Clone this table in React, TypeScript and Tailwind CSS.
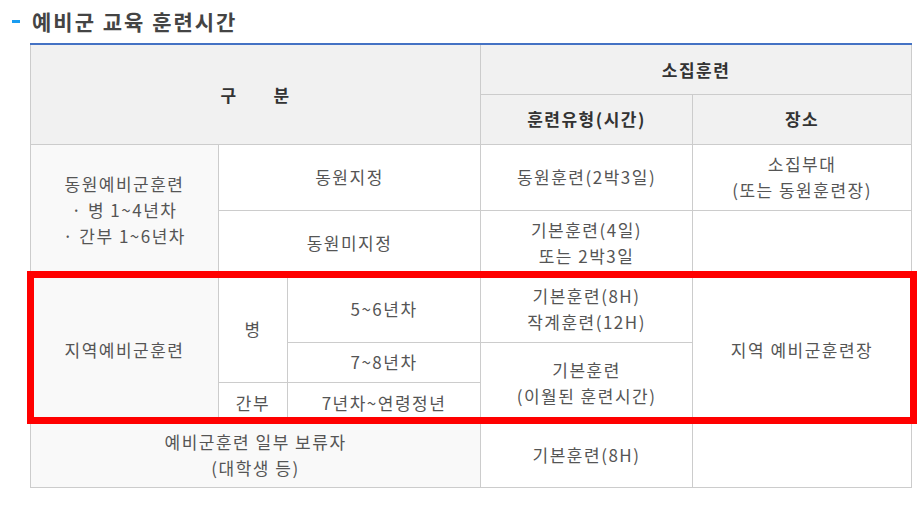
import React from "react";

const font = { fontFamily: '"Noto Sans CJK KR", "Noto Sans", sans-serif' };

export default function App() {
  const th = "border border-[#cccccc] bg-[#f1f1f1] text-[#333333] font-bold text-[17px] tracking-[1.5px] text-center align-middle p-0";
  const tdg = "border border-[#cccccc] bg-[#f9f9f9] text-[#555555] text-[17px] tracking-[1.5px] leading-[26px] text-center align-middle p-0";
  const td = "border border-[#cccccc] bg-white text-[#555555] text-[17px] tracking-[1.5px] leading-[26px] text-center align-middle p-0";
  return (
    <div className="relative w-[921px] h-[508px] bg-white" style={font}>
      <div className="flex items-center h-[30px] pt-[6px] box-content">
        <div className="ml-[12px] w-[8px] h-[3px] bg-[#1a9cf0]" />
        <h1 className="ml-[12px] text-[21px] font-bold tracking-[2px] text-[#444444] leading-[30px] -mt-[1px]">
          예비군 교육 훈련시간
        </h1>
      </div>
      <div className="ml-[30px] mt-[7px] w-[881px]">
        <table className="w-[881px] table-fixed border-collapse">
          <colgroup>
            <col className="w-[188px]" />
            <col className="w-[69px]" />
            <col className="w-[193px]" />
            <col className="w-[212px]" />
            <col className="w-[219px]" />
          </colgroup>
          <tbody>
            <tr className="h-[50px]">
              <th colSpan={3} rowSpan={2} className={th + " border-t-2 border-t-[#4472c4]"}>
                <span className="mr-[36px]">구</span>
                <span>분</span>
              </th>
              <th colSpan={2} className={th + " border-t-2 border-t-[#4472c4]"}>
                소집훈련
              </th>
            </tr>
            <tr className="h-[50px]">
              <th className={th}>훈련유형(시간)</th>
              <th className={th}>장소</th>
            </tr>
            <tr className="h-[66px]">
              <td rowSpan={2} className={tdg}>
                동원예비군훈련
                <br />· 병 1~4년차
                <br />· 간부 1~6년차
              </td>
              <td colSpan={2} className={td}>
                동원지정
              </td>
              <td className={td}>동원훈련(2박3일)</td>
              <td className={td}>
                소집부대
                <br />
                (또는 동원훈련장)
              </td>
            </tr>
            <tr className="h-[66px]">
              <td colSpan={2} className={td}>
                동원미지정
              </td>
              <td className={td}>
                기본훈련(4일)
                <br />
                또는 2박3일
              </td>
              <td className={td}></td>
            </tr>
            <tr className="h-[66px]">
              <td rowSpan={3} className={tdg}>
                지역예비군훈련
              </td>
              <td rowSpan={2} className={td}>
                병
              </td>
              <td className={td}>5~6년차</td>
              <td className={td}>
                기본훈련(8H)
                <br />
                작계훈련(12H)
              </td>
              <td rowSpan={3} className={td}>
                지역 예비군훈련장
              </td>
            </tr>
            <tr className="h-[40px]">
              <td className={td}>7~8년차</td>
              <td rowSpan={2} className={td}>
                기본훈련
                <br />
                (이월된 훈련시간)
              </td>
            </tr>
            <tr className="h-[41px]">
              <td className={td}>간부</td>
              <td className={td}>7년차~연령정년</td>
            </tr>
            <tr className="h-[64px]">
              <td colSpan={3} className={tdg}>
                예비군훈련 일부 보류자
                <br />
                (대학생 등)
              </td>
              <td className={td}>기본훈련(8H)</td>
              <td className={td}></td>
            </tr>
          </tbody>
        </table>
      </div>
      <div className="absolute left-[27px] top-[271px] w-[890px] h-[153px] border-[7px] border-[#ff0000] pointer-events-none" />
    </div>
  );
}
